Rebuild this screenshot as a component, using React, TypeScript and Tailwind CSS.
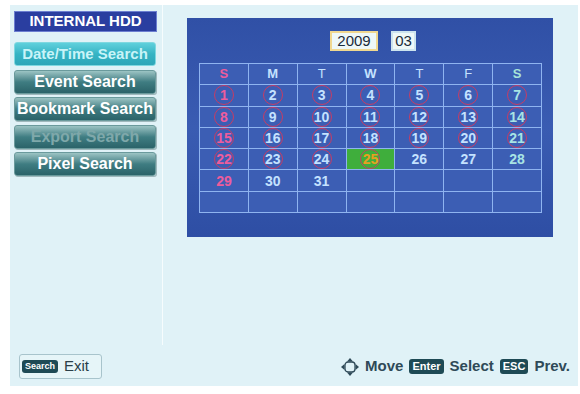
import React from "react";

const days = ["S", "M", "T", "W", "T", "F", "S"];

// 6 weeks of March 2009, starting on Sunday the 1st
const weeks: (number | null)[][] = [
  [1, 2, 3, 4, 5, 6, 7],
  [8, 9, 10, 11, 12, 13, 14],
  [15, 16, 17, 18, 19, 20, 21],
  [22, 23, 24, 25, 26, 27, 28],
  [29, 30, 31, null, null, null, null],
  [null, null, null, null, null, null, null],
];

const recorded = (d: number) => d <= 25;

function MenuButton({ label, active, disabled }: { label: string; active?: boolean; disabled?: boolean }) {
  if (active) {
    return (
      <div className="flex h-[24px] w-[142px] items-center justify-center rounded-[3px] border border-[#7fd8e0] bg-gradient-to-b from-[#5fd0dc] via-[#35b4c4] to-[#2ea6b8] text-[15px] font-bold text-[#c8f4f8]">
        {label}
      </div>
    );
  }
  return (
    <div
      className={`flex h-[24px] w-[142px] items-center justify-center rounded-[3px] border border-[#6a9a9c] bg-gradient-to-b from-[#9cc4c4] via-[#3f7d82] to-[#2b6369] text-[16px] font-bold shadow-[1px_1px_0_#9fb8bc] ${
        disabled ? "text-[#7fa8aa]" : "text-white"
      }`}
    >
      {label}
    </div>
  );
}

function DayCell({ d, col }: { d: number | null; col: number }) {
  if (d === null) return <div className="border-r border-b border-[#8fb4f0]" />;
  const sel = d === 25;
  let color = "text-[#c4e2ff]";
  if (col === 0) color = "text-[#ee5c9c]";
  if (col === 6) color = "text-[#a8e4e4]";
  if (sel) color = "text-[#e8a020]";
  return (
    <div className={`flex items-center justify-center border-r border-b border-[#8fb4f0] ${sel ? "bg-[#3fae3c]" : ""}`}>
      <span
        className={`flex h-[20px] w-[20px] items-center justify-center rounded-full text-[14px] font-bold leading-none ${color} ${
          recorded(d) ? "border border-[#c83c64]" : ""
        }`}
      >
        {d}
      </span>
    </div>
  );
}

function Dpad() {
  return (
    <svg width="18" height="18" viewBox="0 0 18 18">
      <rect x="4" y="4" width="10" height="10" rx="3" fill="none" stroke="#2f4a58" strokeWidth="1.3" />
      <polygon points="9,0 12,3.5 6,3.5" fill="#2f4a58" />
      <polygon points="9,18 12,14.5 6,14.5" fill="#2f4a58" />
      <polygon points="0,9 3.5,6 3.5,12" fill="#2f4a58" />
      <polygon points="18,9 14.5,6 14.5,12" fill="#2f4a58" />
    </svg>
  );
}

export default function App() {
  return (
    <div className="h-[394px] w-[580px] bg-white pl-[10px] pt-[5px] font-['Liberation_Sans',Arial,sans-serif]">
      <div className="flex h-[381px] w-[568px] flex-col bg-[#e0f2f7]">
        <div className="flex h-[340px]">
          {/* left menu */}
          <div className="flex w-[153px] flex-col border-r border-[#f6fcfd] pl-[4px] pt-[6px]">
            <div className="flex h-[21px] w-[143px] items-center justify-center border border-[#6c7ed0] bg-[#2a3ea0] text-[15px] font-bold text-white">
              INTERNAL HDD
            </div>
            <div className="mt-[10px] flex flex-col gap-[3.5px]">
              <MenuButton label="Date/Time Search" active />
              <MenuButton label="Event Search" />
              <MenuButton label="Bookmark Search" />
              <MenuButton label="Export Search" disabled />
              <MenuButton label="Pixel Search" />
            </div>
          </div>

          {/* calendar panel */}
          <div className="ml-[24px] mt-[13px] flex h-[219px] w-[366px] flex-col bg-gradient-to-b from-[#3050a6] via-[#3a5cb2] to-[#2e4ea4]">
            <div className="mt-[13px] flex justify-center gap-[13px] pl-[6px]">
              <div className="flex h-[20px] w-[48px] items-center justify-center border-2 border-[#f0d890] bg-[#eef8f8] text-[15px] text-[#1a2a3a]">
                2009
              </div>
              <div className="flex h-[20px] w-[25px] items-center justify-center border-2 border-[#cde4ee] bg-[#eef8f8] text-[15px] text-[#1a2a3a]">
                03
              </div>
            </div>
            <div className="ml-[12px] mt-[12px] grid h-[150px] w-[343px] grid-cols-7 grid-rows-7 border-t border-l border-[#8fb4f0] bg-[#3c5eb4]">
              {days.map((d, i) => (
                <div
                  key={i}
                  className={`flex items-center justify-center border-r border-b border-[#8fb4f0] text-[13px] ${
                    i === 0 ? "font-bold text-[#ee5c9c]" : i === 6 ? "font-bold text-[#a8e4d8]" : d === "T" || d === "F" ? "text-[#c4e2ff]" : "font-bold text-[#c4e2ff]"
                  }`}
                >
                  {d}
                </div>
              ))}
              {weeks.map((w, wi) => w.map((d, ci) => <DayCell key={`${wi}-${ci}`} d={d} col={ci} />))}
            </div>
          </div>
        </div>

        {/* bottom bar */}
        <div className="flex items-center justify-between pl-[9px] pr-[8px] pt-[9px]">
          <div className="flex h-[25px] w-[83px] items-center gap-[6px] rounded-[3px] border border-[#a8c4cc] bg-[#e6f5f8] pl-[2px]">
            <span className="rounded-[3px] bg-[#1e4a55] px-[3px] py-[2px] text-[9px] font-bold leading-none text-white">Search</span>
            <span className="text-[15px] text-[#2a3e48]">Exit</span>
          </div>
          <div className="flex items-center gap-[6px] text-[15px] font-bold text-[#2f4a58]">
            <Dpad />
            <span>Move</span>
            <span className="rounded-[3px] bg-[#1e4a55] px-[3px] py-[1px] text-[11px] font-bold leading-tight text-white">Enter</span>
            <span>Select</span>
            <span className="rounded-[3px] bg-[#1e4a55] px-[3px] py-[1px] text-[11px] font-bold leading-tight text-white">ESC</span>
            <span>Prev.</span>
          </div>
        </div>
      </div>
    </div>
  );
}
